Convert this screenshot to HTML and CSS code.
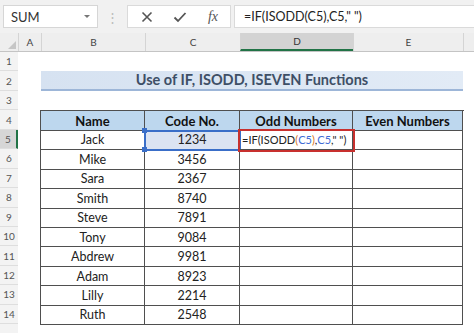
FILE: index.html
```html
<!DOCTYPE html>
<html>

<head>
    <title>ISODD sheet</title>
    <link rel="stylesheet" href="styles.css">
</head>

<body>
    <div class="toolbar">
        <div class="namebox">SUM<span class="caret"></span></div>
        <div class="grip">&#8942;</div>
        <div class="fxbox">
            <svg class="ico" width="12" height="12" viewBox="0 0 12 12">
                <path d="M1.5 1.5 L10.5 10.5 M10.5 1.5 L1.5 10.5" stroke="#555" stroke-width="1.6" fill="none" />
            </svg>
            <svg class="ico" width="14" height="12" viewBox="0 0 14 12">
                <path d="M1.5 6.5 L5 10 L12.5 2" stroke="#555" stroke-width="1.8" fill="none" />
            </svg>
            <span class="fx">fx</span>
        </div>
        <div class="formula">=IF(ISODD(C5),C5," ")</div>
    </div>

    <div class="colhead">
        <div class="corner"><span class="tri"></span></div>
        <div class="ch col-a">A</div>
        <div class="ch col-b">B</div>
        <div class="ch col-c">C</div>
        <div class="ch col-d active">D</div>
        <div class="ch col-e">E</div>
        <div class="ch col-f"></div>
    </div>

    <div class="sheet">
        <div class="rownums">
            <div class="rn">1</div>
            <div class="rn">2</div>
            <div class="rn">3</div>
            <div class="rn">4</div>
            <div class="rn active">5</div>
            <div class="rn">6</div>
            <div class="rn">7</div>
            <div class="rn">8</div>
            <div class="rn">9</div>
            <div class="rn">10</div>
            <div class="rn">11</div>
            <div class="rn">12</div>
            <div class="rn">13</div>
            <div class="rn">14</div>
            <div class="rn"></div>
        </div>
        <div class="cells">
            <div class="blank"></div>
            <div class="blank">
                <div class="title">Use of IF, ISODD, ISEVEN Functions</div>
            </div>
            <div class="blank"></div>
            <div class="data">
                <div class="c head">Name</div>
                <div class="c head">Code No.</div>
                <div class="c head">Odd Numbers</div>
                <div class="c head">Even Numbers</div>

                <div class="c">Jack</div>
                <div class="c selected">1234</div>
                <div class="c editing">=IF(ISODD<span class="paren">(</span><span class="ref">C5</span><span class="paren">)</span>,<span class="ref">C5</span>," ")</div>
                <div class="c"></div>

                <div class="c">Mike</div><div class="c">3456</div><div class="c"></div><div class="c"></div>
                <div class="c">Sara</div><div class="c">2367</div><div class="c"></div><div class="c"></div>
                <div class="c">Smith</div><div class="c">8740</div><div class="c"></div><div class="c"></div>
                <div class="c">Steve</div><div class="c">7891</div><div class="c"></div><div class="c"></div>
                <div class="c">Tony</div><div class="c">9084</div><div class="c"></div><div class="c"></div>
                <div class="c">Abdrew</div><div class="c">9981</div><div class="c"></div><div class="c"></div>
                <div class="c">Adam</div><div class="c">8923</div><div class="c"></div><div class="c"></div>
                <div class="c">Lilly</div><div class="c">2214</div><div class="c"></div><div class="c"></div>
                <div class="c">Ruth</div><div class="c">2548</div><div class="c"></div><div class="c"></div>
            </div>
        </div>
    </div>
</body>

</html>
```

FILE: styles.css
```css
html,
body {
    margin: 0;
    padding: 0;
    width: 474px;
    height: 333px;
    overflow: hidden;
    background: #fff;
    font-family: Lato, 'Liberation Sans', sans-serif;
    color: #222;
}

/* formula bar */
.toolbar {
    height: 33px;
    background: #f1f1f1;
    display: flex;
    align-items: center;
    padding-left: 3px;
    box-sizing: border-box;
}

.namebox {
    width: 95px;
    height: 23px;
    box-sizing: border-box;
    background: #fff;
    border: 1px solid #d6d6d6;
    display: flex;
    align-items: center;
    padding-left: 7px;
    font-size: 13px;
    color: #333;
}

.caret {
    margin-left: auto;
    margin-right: 7px;
    width: 0;
    height: 0;
    border-left: 3px solid transparent;
    border-right: 3px solid transparent;
    border-top: 3px solid #777;
}

.grip {
    width: 29px;
    text-align: center;
    color: #bbb;
    font-size: 13px;
}

.fxbox {
    width: 104px;
    height: 23px;
    box-sizing: border-box;
    background: #fff;
    border: 1px solid #dadada;
    display: flex;
    align-items: center;
    justify-content: space-between;
    padding: 0 12px 0 13px;
}

.fx {
    font-family: 'Liberation Serif', serif;
    font-style: italic;
    font-size: 14px;
    color: #555;
}

.formula {
    flex: 1;
    margin-left: 3px;
    height: 23px;
    box-sizing: border-box;
    background: #fff;
    border: 1px solid #dadada;
    border-right: none;
    padding-left: 9px;
    display: flex;
    align-items: center;
    font-size: 12.5px;
    color: #222;
}

/* column letters */
.colhead {
    display: flex;
    height: 18px;
    background: #eeeeee;
    border-bottom: 1px solid #c4c4c4;
}

.corner {
    width: 18px;
    position: relative;
}

.tri {
    position: absolute;
    right: 2px;
    bottom: 2px;
    width: 0;
    height: 0;
    border-left: 8px solid transparent;
    border-bottom: 8px solid #c6c6c6;
}

.ch {
    box-sizing: border-box;
    border-left: 1px solid #d4d4d4;
    font-size: 10px;
    color: #444;
    display: flex;
    align-items: center;
    justify-content: center;
}

.col-a { width: 23px; }
.col-b { width: 104px; }
.col-c { width: 95px; }
.col-d { width: 113px; }
.col-e { width: 110px; }
.col-f { flex: 1; }

.ch.active {
    background: #d3d3d3;
    border-bottom: 2px solid #217346;
    color: #333;
}

/* row numbers + cells */
.sheet {
    display: flex;
}

.rownums {
    width: 18px;
    background: #f3f3f3;
}

.rn {
    height: 19.45px;
    box-sizing: border-box;
    border-bottom: 1px solid #dedede;
    font-size: 10px;
    color: #555;
    display: flex;
    align-items: center;
    justify-content: center;
}

.rn.active {
    background: #d6d6d6;
    border-right: 2px solid #217346;
}

.cells {
    padding-left: 23px;
}

.blank {
    height: 19.45px;
}

.title {
    width: 422px;
    height: 19.45px;
    box-sizing: border-box;
    background: linear-gradient(to right, #d6e2f1, #e2ebf6);
    border-bottom: 2px solid #9db6d8;
    color: #3e4f66;
    font-weight: bold;
    font-size: 14.5px;
    text-align: center;
    line-height: 18px;
}

/* the bordered table, drawn as a grid so rows keep Excel's height */
.data {
    display: grid;
    grid-template-columns: 104px 95px 113px 110px;
    grid-auto-rows: 19.45px;
    width: 423px;
    border-top: 1px solid #4f4f4f;
    border-left: 1px solid #4f4f4f;
    margin-left: -1px;
    font-size: 12.5px;
}

.c {
    box-sizing: border-box;
    border-right: 1px solid #4f4f4f;
    border-bottom: 1px solid #4f4f4f;
    display: flex;
    align-items: center;
    justify-content: center;
    white-space: nowrap;
    color: #222;
}

.c.head {
    background: #bdd7ee;
    font-size: 13px;
    font-weight: bold;
    color: #111;
}

.c.selected {
    background: #dbe3f2;
    outline: 2px solid #3a6ec8;
    outline-offset: -1px;
    position: relative;
}

.c.selected::before,
.c.selected::after {
    content: "";
    position: absolute;
    left: -3px;
    width: 5px;
    height: 5px;
    background: #3a6ec8;
}

.c.selected::before { top: -3px; }
.c.selected::after { bottom: -3px; }

.c.editing {
    justify-content: flex-start;
    padding-left: 2px;
    font-size: 11px;
    outline: 2px solid #c8302e;
    outline-offset: 0;
    position: relative;
    z-index: 1;
}

.paren { color: #d9731c; }
.ref { color: #3f6dd6; }
```
